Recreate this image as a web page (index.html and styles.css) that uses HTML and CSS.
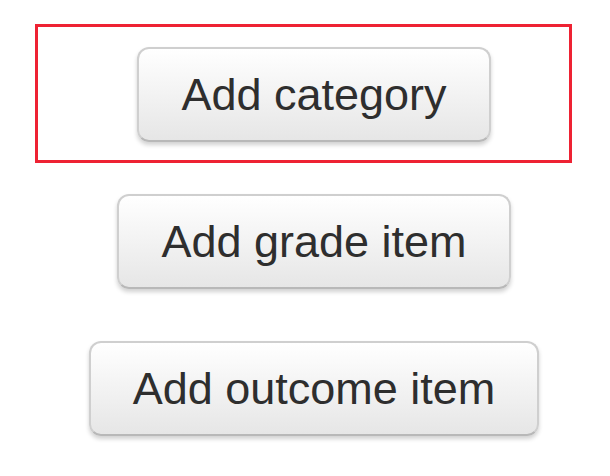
FILE: index.html
```html
<!DOCTYPE html>
<html>
<head>
<meta charset="utf-8">
<link rel="stylesheet" href="styles.css">
</head>
<body>
<div class="stack">
  <button class="btn">Add category</button>
  <button class="btn">Add grade item</button>
  <button class="btn">Add outcome item</button>
</div>
<div class="highlight"></div>
</body>
</html>
```
FILE: styles.css
```css
html, body {
  margin: 0;
  padding: 0;
  background: #fff;
  width: 610px;
  height: 476px;
  overflow: hidden;
}
.stack {
  display: flex;
  flex-direction: column;
  align-items: center;
  gap: 52px;
  padding-top: 47px;
  padding-left: 18px;
}
.btn {
  box-sizing: border-box;
  height: 95px;
  padding: 0 42px;
  font-family: "Liberation Sans", Arial, sans-serif;
  font-size: 45px;
  color: #2e2e2e;
  background: linear-gradient(to bottom, #ffffff 0%, #e6e6e6 100%);
  border: 2px solid #cfcfcf;
  border-bottom-color: #b8b8b8;
  border-radius: 12px;
  box-shadow: 0 3px 4px rgba(0,0,0,0.18);
  line-height: 1;
}
.highlight {
  position: absolute;
  left: 35px;
  top: 24px;
  width: 537px;
  height: 139px;
  box-sizing: border-box;
  border: 3px solid #ee2233;
}
```
